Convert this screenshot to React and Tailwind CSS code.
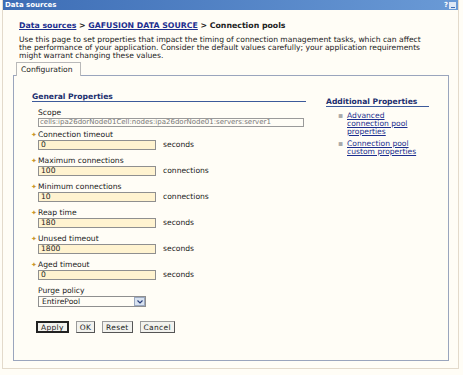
import React from "react";

const fields = [
  { label: "Connection timeout", value: "0", unit: "seconds" },
  { label: "Maximum connections", value: "100", unit: "connections" },
  { label: "Minimum connections", value: "10", unit: "connections" },
  { label: "Reap time", value: "180", unit: "seconds" },
  { label: "Unused timeout", value: "1800", unit: "seconds" },
  { label: "Aged timeout", value: "0", unit: "seconds" },
];

const Field = ({ label, value, unit }) => (
  <div className="mb-[6px]">
    <div className="flex items-center h-[10px] -ml-[7px]">
      <span className="w-[7px] text-[#c9962a] text-[7px] leading-none">✦</span>
      <span>{label}</span>
    </div>
    <div className="flex items-center h-[10px]">
      <div className="w-[118px] h-[10px] bg-[#fff3d0] border border-[#8f8f8f] px-[2px] leading-[8px]">{value}</div>
      <span className="ml-[7px]">{unit}</span>
    </div>
  </div>
);

const Button = ({ children, primary }) => (
  <button
    className={`h-[12px] px-[3px] leading-[9px] bg-[#f2f2ee] text-[7.5px] tracking-[0.3px] ${
      primary ? "border-2 border-[#222]" : "border border-[#9a9a9a] border-r-[#555] border-b-[#555]"
    }`}
  >
    {children}
  </button>
);

export default function App() {
  return (
    <div className="w-[463px] h-[375px] bg-[#fffdf6] font-['DejaVu_Sans',sans-serif] text-[7.6px] text-[#222] overflow-hidden">
      <div className="ml-[2px] w-[457px] h-[369px] border border-[#e3dacb] border-t-0 flex flex-col">
        <div className="h-[10px] bg-gradient-to-r from-[#3d6db5] to-[#6a9ad6] flex items-center justify-between pl-[2px] pr-[2px]">
          <span className="text-white font-bold text-[7px] leading-none">Data sources</span>
          <div className="flex items-center gap-[1px]">
            <span className="text-white font-bold text-[7px] leading-none">?</span>
            <span className="w-[7px] h-[7px] bg-[#dfe8f5] flex items-end justify-center pb-[1px]">
              <span className="w-[4px] h-[1px] bg-[#3d6db5]" />
            </span>
          </div>
        </div>

        <div className="pl-[16px] pr-[10px] pt-[11px]">
          <div className="text-[7.8px] font-bold leading-[10px]">
            <span className="text-[#1c2f8f] underline">Data sources</span>
            <span> &gt; </span>
            <span className="text-[#1c2f8f] underline">GAFUSION DATA SOURCE</span>
            <span> &gt; Connection pools</span>
          </div>
          <p className="mt-[5px] leading-[8px] text-[7.6px] whitespace-nowrap">
            Use this page to set properties that impact the timing of connection management tasks, which can affect
            <br />
            the performance of your application. Consider the default values carefully; your application requirements
            <br />
            might warrant changing these values.
          </p>
        </div>

        <div className="ml-[10px] mt-[2px] w-[436px] flex flex-col">
          <div className="flex">
            <div className="ml-[3px] w-[65px] h-[14px] border border-[#b9b9b9] border-b-0 bg-[#fffdf6] pl-[4px] leading-[13px] relative -mb-[1px] z-10">
              Configuration
            </div>
          </div>
          <div className="h-[286px] border border-[#9aa5bd] bg-[#fffdf6] flex pt-[17px]">
            <div className="pl-[18px] w-[293px]">
              <div className="font-bold text-[#1c2f6f] border-b border-[#3c5a9a] leading-[8px] w-[274px]">
                General Properties
              </div>
              <div className="pl-[6px] mt-[6px]">
                <div className="leading-[10px]">Scope</div>
                <div className="w-[266px] h-[9px] border border-[#9a9a9a] bg-[#fffdf6] text-[#777] text-[7px] leading-[7px] px-[1px] mb-[3px] overflow-hidden whitespace-nowrap">
                  cells:ipa26dorNode01Cell:nodes:ipa26dorNode01:servers:server1
                </div>
                {fields.map((f) => (
                  <Field key={f.label} {...f} />
                ))}
                <div className="mt-[2px] leading-[10px]">Purge policy</div>
                <div className="w-[108px] h-[11px] border border-[#8f8f8f] bg-[#fffdf6] flex items-center">
                  <span className="flex-1 pl-[3px]">EntirePool</span>
                  <span className="w-[11px] h-[9px] bg-[#d8e2f0] border border-[#9aa8c0] flex items-center justify-center">
                    <svg width="6" height="4" viewBox="0 0 6 4">
                      <path d="M0.5 0.5 L3 3 L5.5 0.5" stroke="#2a3f7a" strokeWidth="1.2" fill="none" />
                    </svg>
                  </span>
                </div>
                <div className="flex gap-[7px] mt-[14px] -ml-[2px]">
                  <Button primary>Apply</Button>
                  <Button>OK</Button>
                  <Button>Reset</Button>
                  <Button>Cancel</Button>
                </div>
              </div>
            </div>
            <div className="pl-[19px] pt-[5px]">
              <div className="font-bold text-[#1c2f6f] border-b border-[#3c5a9a] leading-[8px] w-[103px]">
                Additional Properties
              </div>
              <ul className="mt-[5px] pl-[21px]">
                <li className="flex leading-[8px] mb-[4px]">
                  <span className="w-[9px] text-[#aaa] -ml-[9px]">▪</span>
                  <span className="text-[#1c2f8f] underline w-[72px]">Advanced connection pool properties</span>
                </li>
                <li className="flex leading-[8px]">
                  <span className="w-[9px] text-[#aaa] -ml-[9px]">▪</span>
                  <span className="text-[#1c2f8f] underline w-[72px]">Connection pool custom properties</span>
                </li>
              </ul>
            </div>
          </div>
        </div>
      </div>
    </div>
  );
}
